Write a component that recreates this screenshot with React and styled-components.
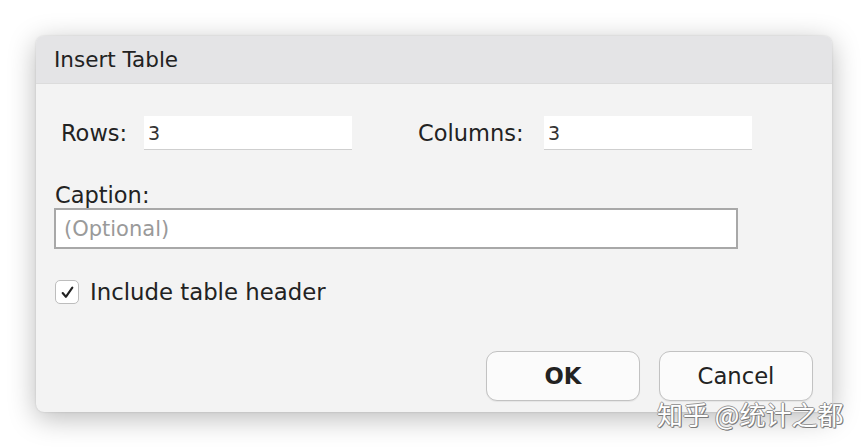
import React from 'react';
import styled, { createGlobalStyle } from 'styled-components';

const GlobalStyle = createGlobalStyle`
  html, body {
    margin: 0;
    padding: 0;
    background: #ffffff;
  }
  body {
    width: 868px;
    height: 448px;
    overflow: hidden;
    font-family: "DejaVu Sans", "Noto Sans", sans-serif;
  }
`;

const Page = styled.div`
  position: relative;
  width: 868px;
  height: 448px;
  padding: 36px 0 0 36px;
  box-sizing: border-box;
`;

const Dialog = styled.div`
  width: 796px;
  height: 376px;
  border-radius: 8px;
  overflow: hidden;
  background: #f3f3f3;
  box-shadow: 0 6px 28px rgba(0, 0, 0, 0.28), 0 0 2px rgba(0, 0, 0, 0.15);
  display: flex;
  flex-direction: column;
`;

const TitleBar = styled.div`
  height: 47px;
  flex-shrink: 0;
  background: #e4e4e6;
  display: flex;
  align-items: center;
  padding-left: 18px;
  font-size: 21.5px;
  color: #222;
  border-bottom: 1px solid #dcdcdc;
`;

const Body = styled.div`
  flex: 1;
  display: flex;
  flex-direction: column;
  padding: 32px 19px 10px 18px;
`;

const FieldRow = styled.div`
  display: flex;
  align-items: center;
`;

const Label = styled.label`
  font-size: 22.5px;
  color: #222;
  width: ${({ w }) => w}px;
  padding-left: ${({ pad }) => pad || 0}px;
  box-sizing: border-box;
  flex-shrink: 0;
`;

const NumberInput = styled.div`
  width: 208px;
  height: 34px;
  background: #fff;
  border-bottom: 1px solid #cfcfcf;
  box-sizing: border-box;
  display: flex;
  align-items: center;
  padding-left: 4px;
  font-size: 19px;
  color: #333;
  margin-right: ${({ mr }) => mr || 0}px;
`;

const CaptionLabel = styled.div`
  margin-top: 33px;
  padding-left: 1px;
  font-size: 22.5px;
  color: #222;
  line-height: 24px;
`;

const CaptionInput = styled.div`
  margin-top: 1px;
  width: 684px;
  height: 41px;
  background: #fff;
  border: 2px solid #a8a8a8;
  box-sizing: border-box;
  display: flex;
  align-items: center;
  padding-left: 8px;
  font-size: 21px;
  color: #9a9a9a;
`;

const CheckRow = styled.div`
  margin-top: 31px;
  height: 24px;
  display: flex;
  align-items: center;
  gap: 11px;
  padding-left: 1px;
  font-size: 22.8px;
  color: #222;
`;

const Box = styled.span`
  width: 24px;
  height: 24px;
  border: 1px solid #bdbdbd;
  border-radius: 5px;
  background: #fff;
  box-sizing: border-box;
  display: flex;
  align-items: center;
  justify-content: center;
`;

const Buttons = styled.div`
  margin-top: auto;
  display: flex;
  justify-content: flex-end;
  gap: 19px;
  padding-bottom: 1px;
`;

const Button = styled.button`
  width: 154px;
  height: 50px;
  border-radius: 11px;
  border: 1px solid #c2c2c2;
  background: #fbfbfb;
  font-family: "DejaVu Sans", "Noto Sans", sans-serif;
  font-size: 22.7px;
  font-weight: ${({ primary }) => (primary ? 700 : 400)};
  color: #222;
  box-shadow: 0 1px 1px rgba(0, 0, 0, 0.06);
`;

const Watermark = styled.div`
  position: absolute;
  left: 657px;
  top: 401px;
  font-family: "Noto Sans CJK SC", sans-serif;
  font-size: 26px;
  line-height: 1;
  color: #fff;
  text-shadow: 1px 1px 0 #7a7a7a, -1px 0 0 #9a9a9a, 0 -1px 0 #9a9a9a, 1px 0 0 #8a8a8a, 0 1px 0 #8a8a8a;
`;

export default function App() {
  return (
    <>
      <GlobalStyle />
      <Page>
        <Dialog>
          <TitleBar>Insert Table</TitleBar>
          <Body>
            <FieldRow>
              <Label w={90} pad={7}>Rows:</Label>
              <NumberInput mr={66}>3</NumberInput>
              <Label w={126}>Columns:</Label>
              <NumberInput>3</NumberInput>
            </FieldRow>
            <CaptionLabel>Caption:</CaptionLabel>
            <CaptionInput>(Optional)</CaptionInput>
            <CheckRow>
              <Box>
                <svg width="15" height="15" viewBox="0 0 14 14">
                  <path d="M2.5 7.5 L5.5 11 L11.5 2.5" fill="none" stroke="#222" strokeWidth="2" strokeLinecap="round" strokeLinejoin="round" />
                </svg>
              </Box>
              Include table header
            </CheckRow>
            <Buttons>
              <Button primary>OK</Button>
              <Button>Cancel</Button>
            </Buttons>
          </Body>
        </Dialog>
        <Watermark>知乎 @统计之都</Watermark>
      </Page>
    </>
  );
}
